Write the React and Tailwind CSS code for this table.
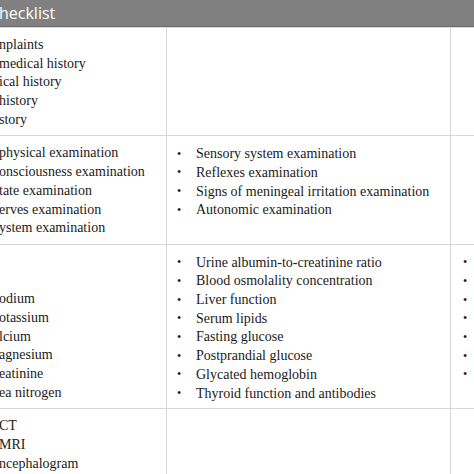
import React from "react";

// Cropped view of a clinical checklist table
const rows = [
  {
    left: ["nplaints", "medical history", "ical history", "history", "story"],
    mid: [],
    right: [],
  },
  {
    left: [
      "physical examination",
      "onsciousness examination",
      "tate examination",
      "erves examination",
      "ystem examination",
    ],
    mid: [
      "Sensory system examination",
      "Reflexes examination",
      "Signs of meningeal irritation examination",
      "Autonomic examination",
    ],
    right: [],
  },
  {
    left: ["", "", "odium", "otassium", "lcium", "agnesium", "eatinine", "ea nitrogen"],
    mid: [
      "Urine albumin-to-creatinine ratio",
      "Blood osmolality concentration",
      "Liver function",
      "Serum lipids",
      "Fasting glucose",
      "Postprandial glucose",
      "Glycated hemoglobin",
      "Thyroid function and antibodies",
    ],
    right: ["", "", "", "", "", "", ""],
  },
  {
    left: ["CT", "MRI", "ncephalogram"],
    mid: [],
    right: [],
  },
];

function Bullets({ items, pad }) {
  return (
    <div className={pad}>
      {items.map((t, i) => (
        <div key={i} className="flex items-center h-[18.7px]">
          <span className="w-[19px] shrink-0 text-[12px] leading-none">•</span>
          <span className="whitespace-nowrap">{t}</span>
        </div>
      ))}
    </div>
  );
}

export default function App() {
  return (
    <div
      className="w-[474px] h-[474px] overflow-hidden bg-white text-[#1c1a1a] text-[14px] font-['Liberation_Serif',serif]"
    >
      {/* Header */}
      <div className="h-[27px] bg-[#808080] text-white text-[16px] leading-[26px] -ml-[1px] border-b border-[#6a6a6a] font-['Open_Sans',sans-serif]">
        hecklist
      </div>
      <div className="h-[1px] bg-[#dadada]" />

      {/* Body */}
      {rows.map((row, r) => (
        <div
          key={r}
          className="grid grid-cols-[167px_284px_1fr] border-b border-[#d6d6d6]"
        >
          <div className="border-r border-[#d6d6d6] pt-[8px] pb-[6px] overflow-hidden">
            {row.left.map((t, i) => (
              <div key={i} className="h-[18.7px] leading-[18.7px] whitespace-nowrap -ml-[1px]">
                {t}
              </div>
            ))}
          </div>
          <div className="border-r border-[#d6d6d6] pt-[8px] pb-[6px]">
            <Bullets items={row.mid} pad="pl-[10px]" />
          </div>
          <div className="pt-[8px] pb-[6px] overflow-hidden">
            <Bullets items={row.right} pad="pl-[12px]" />
          </div>
        </div>
      ))}
    </div>
  );
}
